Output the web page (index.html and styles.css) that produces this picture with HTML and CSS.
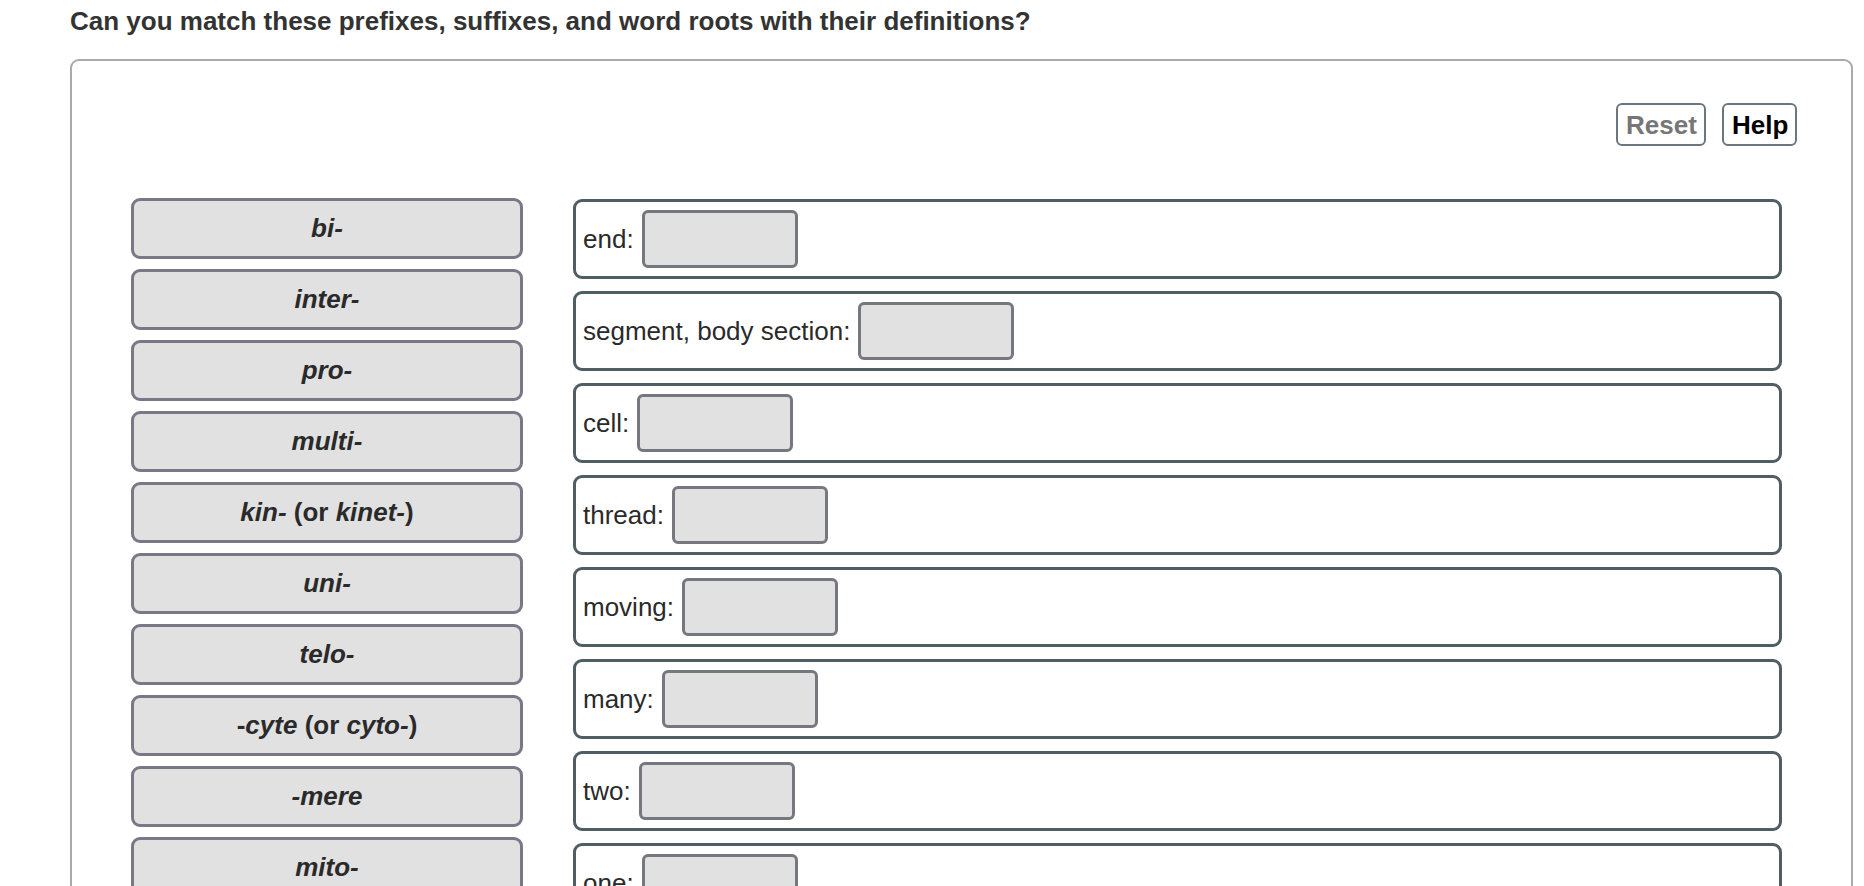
FILE: index.html
```html
<!DOCTYPE html>
<html lang="en">
<head>
<meta charset="utf-8">
<title>Match prefixes, suffixes, and word roots</title>
<link rel="stylesheet" href="styles.css">
</head>
<body>
<div class="page">
  <h1 class="question">Can you match these prefixes, suffixes, and word roots with their definitions?</h1>
  <div class="card">
    <div class="toolbar">
      <button class="btn btn-reset">Reset</button>
      <button class="btn btn-help">Help</button>
    </div>
    <div class="board">
      <div class="terms">
        <div class="term"><i>bi-</i></div>
        <div class="term"><i>inter-</i></div>
        <div class="term"><i>pro-</i></div>
        <div class="term"><i>multi-</i></div>
        <div class="term"><span><i>kin-</i> (or <i>kinet-</i>)</span></div>
        <div class="term"><i>uni-</i></div>
        <div class="term"><i>telo-</i></div>
        <div class="term"><span>-<i>cyte</i> (or <i>cyto-</i>)</span></div>
        <div class="term"><i>-mere</i></div>
        <div class="term"><i>mito-</i></div>
      </div>
      <div class="defs">
        <div class="def"><span class="label">end:</span><span class="slot"></span></div>
        <div class="def"><span class="label">segment, body section:</span><span class="slot"></span></div>
        <div class="def"><span class="label">cell:</span><span class="slot"></span></div>
        <div class="def"><span class="label">thread:</span><span class="slot"></span></div>
        <div class="def"><span class="label">moving:</span><span class="slot"></span></div>
        <div class="def"><span class="label">many:</span><span class="slot"></span></div>
        <div class="def"><span class="label">two:</span><span class="slot"></span></div>
        <div class="def"><span class="label">one:</span><span class="slot"></span></div>
        <div class="def"><span class="label">between:</span><span class="slot"></span></div>
        <div class="def"><span class="label">before:</span><span class="slot"></span></div>
      </div>
    </div>
  </div>
</div>
</body>
</html>
```
FILE: styles.css
```css
html, body {
  margin: 0;
  padding: 0;
  background: #ffffff;
}

body {
  font-family: "Liberation Sans", Arial, Helvetica, sans-serif;
  color: #333333;
}

.page {
  padding: 0 11px 40px 70px;
}

.question {
  margin: 0;
  padding-top: 6px;
  font-size: 26px;
  line-height: 30px;
  font-weight: bold;
  color: #333333;
}

.card {
  margin-top: 23px;
  border: 2px solid #aaaaaa;
  border-radius: 9px;
  padding: 42px 54px 40px 59px;
}

.toolbar {
  display: flex;
  justify-content: flex-end;
  gap: 16px;
}

.btn {
  height: 43px;
  padding: 0 8px;
  border: 2px solid #6b777e;
  border-radius: 6px;
  background: #ffffff;
  font-family: "Liberation Sans", Arial, Helvetica, sans-serif;
  font-size: 26px;
  font-weight: bold;
  line-height: 1;
}

.btn-reset {
  color: #767676;
  width: 90px;
}

.btn-help {
  color: #000000;
  width: 75px;
}

.board {
  display: grid;
  grid-template-columns: 392px 1fr;
  column-gap: 50px;
  margin-top: 52px;
  margin-right: 15px;
  align-items: start;
}

.terms {
  display: flex;
  flex-direction: column;
  gap: 10px;
}

.term {
  height: 61px;
  box-sizing: border-box;
  border: 3px solid #7a7886;
  border-radius: 9px;
  background: #e1e1e1;
  display: flex;
  align-items: center;
  justify-content: center;
  font-size: 26px;
  font-weight: bold;
  color: #2a2a2a;
}

.defs {
  display: flex;
  flex-direction: column;
  gap: 12px;
  padding-top: 1px;
}

.def {
  height: 80px;
  box-sizing: border-box;
  border: 3px solid #505d63;
  border-radius: 9px;
  background: #ffffff;
  display: flex;
  align-items: center;
  gap: 8px;
  padding: 0 7px;
  font-size: 26px;
  color: #2a2a2a;
}

.slot {
  display: block;
  width: 156px;
  height: 58px;
  box-sizing: border-box;
  border: 3px solid #777780;
  border-radius: 6px;
  background: #e1e1e1;
}
```
